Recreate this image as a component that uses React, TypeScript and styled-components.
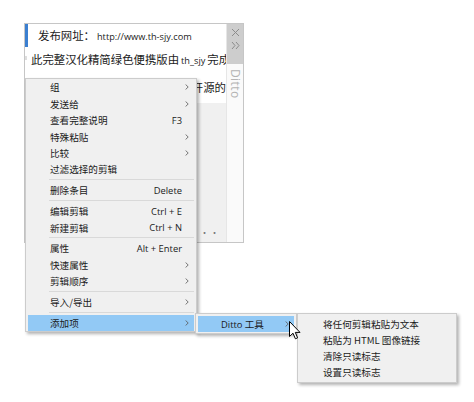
import React from "react";
import styled, { createGlobalStyle } from "styled-components";

const GlobalStyle = createGlobalStyle`
  html, body {
    margin: 0;
    padding: 0;
    background: #ffffff;
  }
  body {
    font-family: "Noto Sans CJK SC", "Noto Sans", sans-serif;
    color: #1b1b1b;
  }
`;

const Stage = styled.div`
  position: relative;
  width: 474px;
  height: 402px;
  overflow: hidden;
  background: #ffffff;
`;

// ---- Ditto window ----

const DittoWindow = styled.div`
  position: absolute;
  left: 24px;
  top: 23px;
  width: 220px;
  height: 220px;
  box-sizing: border-box;
  border: 1px solid #c6c6c6;
  display: flex;
  background: #ffffff;
`;

const ClipList = styled.div`
  flex: 1;
  display: flex;
  flex-direction: column;
  min-width: 0;
`;

const ClipRow = styled.div<{ $selected?: boolean; $indent: number }>`
  position: relative;
  padding-left: ${(p) => p.$indent}px;
  display: flex;
  flex-direction: column;
  white-space: nowrap;
  overflow: hidden;

  &::before {
    content: "";
    position: absolute;
    left: 0;
    top: ${(p) => (p.$selected ? "0" : "9px")};
    width: ${(p) => (p.$selected ? "3px" : "2px")};
    height: ${(p) => (p.$selected ? "23px" : "4px")};
    background: ${(p) => (p.$selected ? "#3b7fd0" : "#dedede")};
  }
`;

const ClipLine = styled.div<{ $height: number }>`
  height: ${(p) => p.$height}px;
  line-height: ${(p) => p.$height}px;
  font-size: 11.4px;
  color: #1b1b1b;
  display: flex;
  align-items: baseline;
`;

const Latin = styled.span`
  font-family: "Open Sans", "Noto Sans", sans-serif;
  font-size: 9.2px;
  margin: 0 2px;
`;

const Filler = styled.span`
  display: inline-block;
  width: 171px;
  overflow: hidden;
  color: #1b1b1b;
`;

const EmptyArea = styled.div`
  flex: 1;
  background: #f0f0f0;
  display: flex;
  align-items: flex-end;
  justify-content: flex-end;
  padding: 0 6px 4px 0;
`;

const Dots = styled.span`
  font-size: 9px;
  letter-spacing: 1px;
  color: #777777;
  line-height: 10px;
`;

const SideStrip = styled.div`
  width: 16px;
  display: flex;
  flex-direction: column;
  background: #fafafa;
  border-left: 1px solid #e6e6e6;
`;

const StripButtons = styled.div`
  height: 40px;
  background: #cdcdcd;
  display: flex;
  flex-direction: column;
  align-items: center;
  padding-top: 4px;
  gap: 4px;
  box-sizing: border-box;
`;

const StripTitle = styled.div`
  writing-mode: vertical-rl;
  font-family: "Open Sans", "Noto Sans", sans-serif;
  font-size: 12px;
  color: #b4b4b4;
  padding-top: 5px;
  align-self: center;
  letter-spacing: 0.4px;
`;

// ---- context menus ----

const Menu = styled.div<{ $left: number; $top: number; $width: number; $padY: number }>`
  position: absolute;
  left: ${(p) => p.$left}px;
  top: ${(p) => p.$top}px;
  width: ${(p) => p.$width}px;
  box-sizing: border-box;
  padding: ${(p) => p.$padY}px 2px;
  background: #f0f0f0;
  border: 1px solid #cccccc;
  box-shadow: 2px 2px 3px rgba(0, 0, 0, 0.3);
  font-size: 9.6px;
  color: #1b1b1b;
`;

const Item = styled.div<{ $active?: boolean; $h?: number; $pad?: number }>`
  height: ${(p) => p.$h ?? 16.45}px;
  display: flex;
  align-items: center;
  padding-left: ${(p) => p.$pad ?? 22}px;
  padding-right: 12px;
  position: relative;
  background: ${(p) => (p.$active ? "#92c9f5" : "transparent")};
  white-space: nowrap;
`;

const Label = styled.span`
  flex: 1;
`;

const Shortcut = styled.span`
  font-family: "Open Sans", "Noto Sans", sans-serif;
  font-size: 9.4px;
  color: #1b1b1b;
`;

const Chevron = styled.svg`
  position: absolute;
  right: 5px;
  top: 50%;
  margin-top: -3px;
  width: 4px;
  height: 6px;
`;

const Separator = styled.div`
  height: 4.4px;
  display: flex;
  align-items: center;
  padding-left: 21px;

  &::after {
    content: "";
    flex: 1;
    height: 1px;
    background: #d9d9d9;
  }
`;

const Cursor = styled.svg`
  position: absolute;
  left: 289px;
  top: 321px;
  width: 12px;
  height: 19px;
`;

const Arrow = () => (
  <Chevron viewBox="0 0 4 6">
    <polyline points="0.6,0.5 3.2,3 0.6,5.5" fill="none" stroke="#555" strokeWidth="0.8" />
  </Chevron>
);

type Entry =
  | { sep: true }
  | { label: string; shortcut?: string; sub?: boolean; active?: boolean };

const mainItems: Entry[] = [
  { label: "组", sub: true },
  { label: "发送给", sub: true },
  { label: "查看完整说明", shortcut: "F3" },
  { label: "特殊粘贴", sub: true },
  { label: "比较", sub: true },
  { label: "过滤选择的剪辑" },
  { sep: true },
  { label: "删除条目", shortcut: "Delete" },
  { sep: true },
  { label: "编辑剪辑", shortcut: "Ctrl + E" },
  { label: "新建剪辑", shortcut: "Ctrl + N" },
  { sep: true },
  { label: "属性", shortcut: "Alt + Enter" },
  { label: "快速属性", sub: true },
  { label: "剪辑顺序", sub: true },
  { sep: true },
  { label: "导入/导出", sub: true },
  { sep: true },
  { label: "添加项", sub: true, active: true },
];

const toolItems = ["将任何剪辑粘贴为文本", "粘贴为 HTML 图像链接", "清除只读标志", "设置只读标志"];

export default function App() {
  return (
    <Stage>
      <GlobalStyle />

      <DittoWindow>
        <ClipList>
          <ClipRow $selected $indent={13}>
            <ClipLine $height={23}>
              发布网址：<Latin>http://www.th-sjy.com</Latin>
            </ClipLine>
          </ClipRow>
          <ClipRow $indent={6}>
            <ClipLine $height={25}>
              此完整汉化精简绿色便携版由<Latin>th_sjy</Latin>完成
            </ClipLine>
            <ClipLine $height={31}>
              <Filler>基于 Ditto 剪贴板管理器</Filler>开源的
            </ClipLine>
          </ClipRow>
          <EmptyArea>
            <Dots>•••</Dots>
          </EmptyArea>
        </ClipList>
        <SideStrip>
          <StripButtons>
            <svg width="9" height="9" viewBox="0 0 9 9">
              <path d="M1 1 L8 8 M8 1 L1 8" stroke="#8c8c8c" strokeWidth="1" />
            </svg>
            <svg width="9" height="9" viewBox="0 0 9 9">
              <path d="M1 1 L4 4.5 L1 8 M5 1 L8 4.5 L5 8" stroke="#8c8c8c" strokeWidth="1" fill="none" />
            </svg>
          </StripButtons>
          <StripTitle>Ditto</StripTitle>
        </SideStrip>
      </DittoWindow>

      <Menu $left={25} $top={78} $width={172} $padY={0}>
        {mainItems.map((e, i) =>
          "sep" in e ? (
            <Separator key={i} />
          ) : (
            <Item key={i} $active={e.active}>
              <Label>{e.label}</Label>
              {e.shortcut && <Shortcut>{e.shortcut}</Shortcut>}
              {e.sub && <Arrow />}
            </Item>
          )
        )}
      </Menu>

      <Menu $left={195} $top={313} $width={102} $padY={1.5}>
        <Item $active $pad={23}>
          <Label>
            <Shortcut>Ditto</Shortcut> 工具
          </Label>
          <Arrow />
        </Item>
      </Menu>

      <Menu $left={297} $top={313} $width={160} $padY={2}>
        {toolItems.map((t) => (
          <Item key={t} $h={16} $pad={23}>
            <Label>{t}</Label>
          </Item>
        ))}
      </Menu>

      <Cursor viewBox="0 0 12 19">
        <path
          d="M0.5 0.5 L0.5 15.5 L4 12.2 L6.4 17.8 L8.6 16.8 L6.3 11.4 L11 11.4 Z"
          fill="#ffffff"
          stroke="#000000"
          strokeWidth="1"
          strokeLinejoin="round"
        />
      </Cursor>
    </Stage>
  );
}
